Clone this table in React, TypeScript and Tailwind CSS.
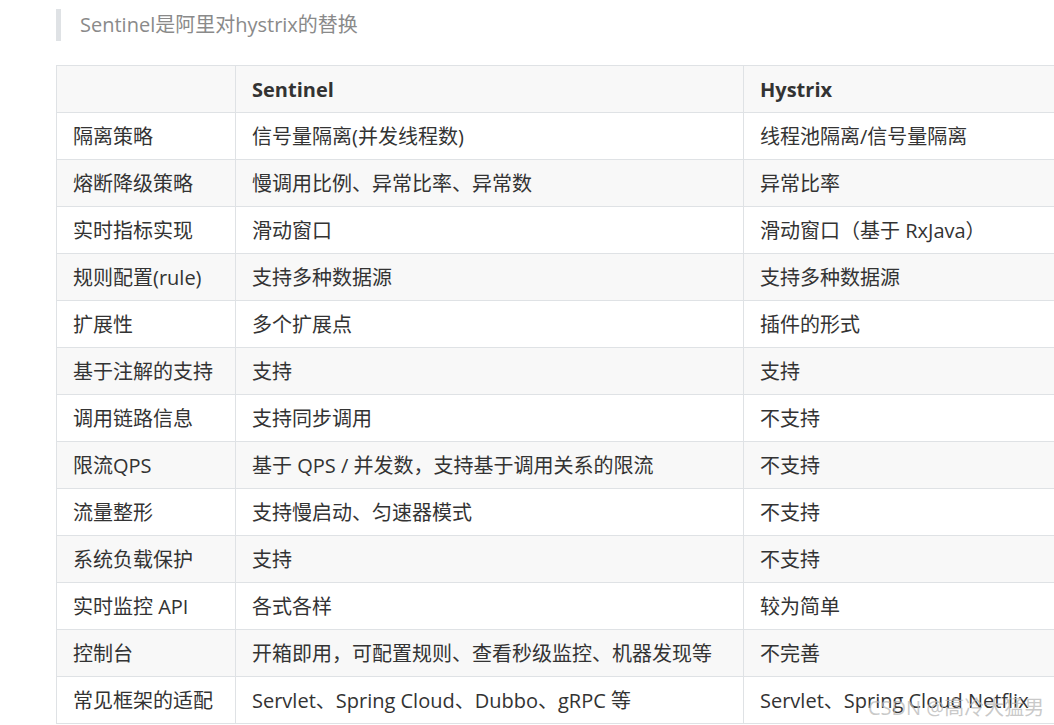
const ROWS: [string, string, string][] = [
  ['隔离策略', '信号量隔离(并发线程数)', '线程池隔离/信号量隔离'],
  ['熔断降级策略', '慢调用比例、异常比率、异常数', '异常比率'],
  ['实时指标实现', '滑动窗口', '滑动窗口（基于 RxJava）'],
  ['规则配置(rule)', '支持多种数据源', '支持多种数据源'],
  ['扩展性', '多个扩展点', '插件的形式'],
  ['基于注解的支持', '支持', '支持'],
  ['调用链路信息', '支持同步调用', '不支持'],
  ['限流QPS', '基于 QPS / 并发数，支持基于调用关系的限流', '不支持'],
  ['流量整形', '支持慢启动、匀速器模式', '不支持'],
  ['系统负载保护', '支持', '不支持'],
  ['实时监控 API', '各式各样', '较为简单'],
  ['控制台', '开箱即用，可配置规则、查看秒级监控、机器发现等', '不完善'],
  ['常见框架的适配', 'Servlet、Spring Cloud、Dubbo、gRPC 等', 'Servlet、Spring Cloud Netflix'],
];

export default function App() {
  return (
    <div
      className="relative w-[1054px] h-[725px] overflow-hidden bg-white text-[#333]"
      style={{ fontFamily: '"Open Sans", "Noto Sans CJK SC", sans-serif' }}
    >
      {/* quote */}
      <div className="absolute left-[56px] top-[9px]">
        <div className="border-l-[5px] border-[#dfe2e5] pl-[19px] h-[32px] flex items-center text-[20px] text-[#8a8a8a]">
          Sentinel是阿里对hystrix的替换
        </div>
      </div>

      <div className="pt-[65px] pl-[56px]">
        <table className="border-collapse table-fixed w-[1100px] text-[20px]">
          <colgroup>
            <col className="w-[179px]" />
            <col className="w-[508px]" />
            <col className="w-[413px]" />
          </colgroup>
          <thead>
            <tr className="bg-[#f8f8f8]">
              <th className="border border-[#dfe2e5] h-[47px] px-4 pt-px text-left font-bold"></th>
              <th className="border border-[#dfe2e5] h-[47px] px-4 pt-px text-left font-bold">Sentinel</th>
              <th className="border border-[#dfe2e5] h-[47px] px-4 pt-px text-left font-bold">Hystrix</th>
            </tr>
          </thead>
          <tbody>
            {ROWS.map((r, i) => (
              <tr key={i} className={i % 2 === 1 ? 'bg-[#f8f8f8]' : 'bg-white'}>
                {r.map((c, j) => (
                  <td key={j} className="border border-[#dfe2e5] h-[47px] px-4 pt-px whitespace-nowrap leading-[28px]">
                    {c}
                  </td>
                ))}
              </tr>
            ))}
          </tbody>
        </table>
      </div>

      {/* watermark */}
      <div className="absolute left-[868px] top-[694px] leading-[28px] text-[20px] text-[#b8b8b8]/75 whitespace-nowrap">
        CSDN @高冷大猛男
      </div>
    </div>
  );
}
